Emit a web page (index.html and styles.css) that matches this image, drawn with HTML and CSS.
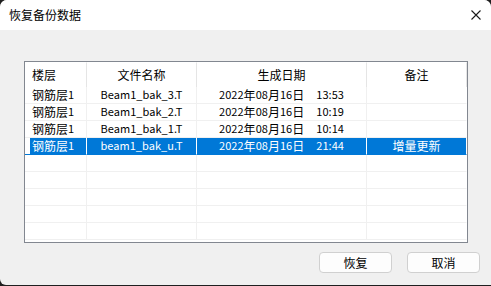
FILE: index.html
```html
<!DOCTYPE html>
<html lang="zh-CN">
<head>
<meta charset="utf-8">
<title>恢复备份数据</title>
<link rel="stylesheet" href="styles.css">
</head>
<body>
<div class="window">
  <div class="titlebar">
    <span class="title">恢复备份数据</span>
    <svg class="close" width="10" height="10" viewBox="0 0 10 10"><path d="M0.5 0.5 L9.5 9.5 M9.5 0.5 L0.5 9.5" stroke="#1a1a1a" stroke-width="1.1" fill="none"/></svg>
  </div>
  <div class="content">
    <div class="listbox">
      <div class="head">
        <div class="hc c1">楼层</div>
        <div class="hc c2">文件名称</div>
        <div class="hc c3">生成日期</div>
        <div class="hc c4">备注</div>
      </div>
      <div class="row">
        <div class="cell c1">钢筋层<span class="l">1</span></div>
        <div class="cell c2"><span class="l">Beam1_bak_3.T</span></div>
        <div class="cell c3"><span class="l">2022</span>年<span class="l">08</span>月<span class="l">16</span>日<span class="l time">13:53</span></div>
        <div class="cell c4"></div>
      </div>
      <div class="row">
        <div class="cell c1">钢筋层<span class="l">1</span></div>
        <div class="cell c2"><span class="l">Beam1_bak_2.T</span></div>
        <div class="cell c3"><span class="l">2022</span>年<span class="l">08</span>月<span class="l">16</span>日<span class="l time">10:19</span></div>
        <div class="cell c4"></div>
      </div>
      <div class="row">
        <div class="cell c1">钢筋层<span class="l">1</span></div>
        <div class="cell c2"><span class="l">Beam1_bak_1.T</span></div>
        <div class="cell c3"><span class="l">2022</span>年<span class="l">08</span>月<span class="l">16</span>日<span class="l time">10:14</span></div>
        <div class="cell c4"></div>
      </div>
      <div class="row sel">
        <div class="cell c1">钢筋层<span class="l">1</span></div>
        <div class="cell c2"><span class="l">beam1_bak_u.T</span></div>
        <div class="cell c3"><span class="l">2022</span>年<span class="l">08</span>月<span class="l">16</span>日<span class="l time">21:44</span></div>
        <div class="cell c4">增量更新</div>
      </div>
      <div class="row"><div class="cell c1"></div><div class="cell c2"></div><div class="cell c3"></div><div class="cell c4"></div></div>
      <div class="row"><div class="cell c1"></div><div class="cell c2"></div><div class="cell c3"></div><div class="cell c4"></div></div>
      <div class="row"><div class="cell c1"></div><div class="cell c2"></div><div class="cell c3"></div><div class="cell c4"></div></div>
      <div class="row"><div class="cell c1"></div><div class="cell c2"></div><div class="cell c3"></div><div class="cell c4"></div></div>
      <div class="row"><div class="cell c1"></div><div class="cell c2"></div><div class="cell c3"></div><div class="cell c4"></div></div>
    </div>
    <div class="footer">
      <button class="btn">恢复</button>
      <button class="btn">取消</button>
    </div>
  </div>
</div>
</body>
</html>
```
FILE: styles.css
```css
html, body {
  margin: 0;
  padding: 0;
  background: #1f1f1f;
}
body {
  font-family: "Noto Sans CJK SC", sans-serif;
  font-size: 12px;
  color: #000;
}
.window {
  width: 491px;
  height: 285px;
  background: #f0f0f0;
  border-radius: 7px 7px 0 6px;
  overflow: hidden;
  display: flex;
  flex-direction: column;
}
.titlebar {
  height: 30px;
  flex: none;
  background: #fff;
  display: flex;
  align-items: center;
  justify-content: space-between;
  padding: 0 10px 0 9px;
  box-sizing: border-box;
}
.title {
  font-size: 12px;
  color: #000;
  line-height: 1;
}
.close {
  display: block;
  margin-top: -1px;
}
.content {
  padding: 31px 0 0 24px;
}
.listbox {
  width: 442px;
  height: 180px;
  border: 1px solid #828790;
  background: #fff;
  overflow: hidden;
}
.head {
  display: flex;
  height: 25px;
}
.hc {
  box-sizing: border-box;
  height: 25px;
  display: flex;
  align-items: center;
  justify-content: center;
  border-right: 1px solid #e5e5e5;
  border-top: 1px solid #fff;
  line-height: 1;
}
.c1 { width: 62px; }
.c2 { width: 110px; }
.c3 { width: 170px; }
.c4 { width: 100px; }
.hc.c1, .cell.c1 {
  justify-content: flex-start;
  padding-left: 7px;
}
.row {
  display: flex;
  height: 17px;
}
.cell {
  box-sizing: border-box;
  height: 17px;
  border-right: 1px solid #f0f0f0;
  border-bottom: 1px solid #f0f0f0;
  display: flex;
  align-items: center;
  justify-content: center;
  white-space: nowrap;
  line-height: 1;
  padding-bottom: 1px;
}
.l {
  font-size: 11px;
  letter-spacing: 0.05px;
}
.cell.c4 { border-right-color: #fff; }
.time { margin-left: 12px; }
.row.sel .cell {
  background: #0078d7;
  color: #fff;
  border-right-color: #fff;
  border-bottom-color: #0078d7;
}
.row.sel .cell.c1 {
  background: linear-gradient(to right, #fff 5px, #0078d7 5px);
}
.footer {
  display: flex;
  justify-content: flex-end;
  gap: 15px;
  padding: 9px 11px 0 0;
}
.btn {
  width: 73px;
  height: 21px;
  box-sizing: border-box;
  border: 1px solid #d0d0d0;
  border-radius: 4px;
  background: #fdfdfd;
  font-family: "Noto Sans CJK SC", sans-serif;
  font-size: 12px;
  color: #000;
  padding: 0;
  line-height: 1;
}
```
